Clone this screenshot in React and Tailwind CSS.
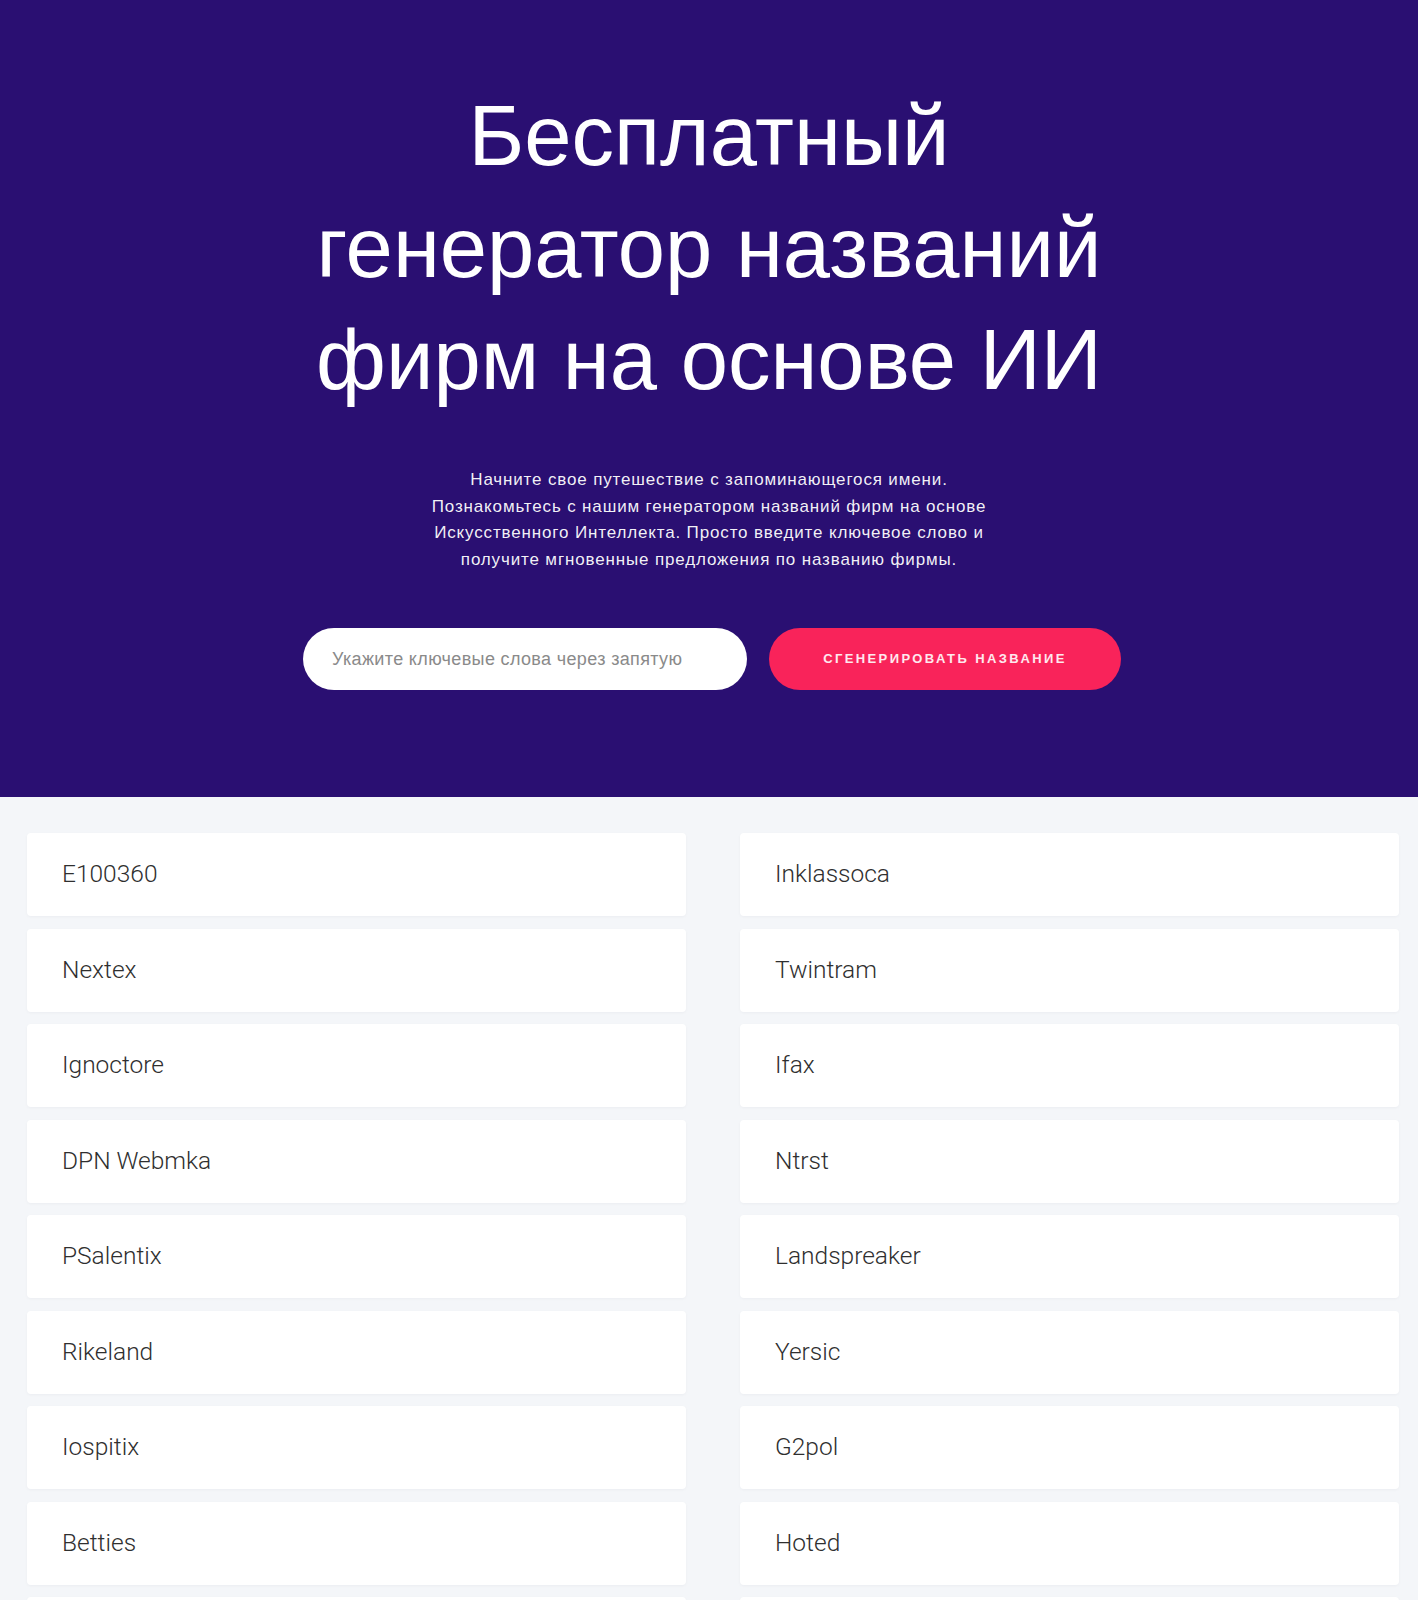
const LEFT = ["E100360", "Nextex", "Ignoctore", "DPN Webmka", "PSalentix", "Rikeland", "Iospitix", "Betties", "Zentrox"];
const RIGHT = ["Inklassoca", "Twintram", "Ifax", "Ntrst", "Landspreaker", "Yersic", "G2pol", "Hoted", "Vexpoint"];

const names = LEFT.flatMap((n, i) => [n, RIGHT[i]]);

export default function App() {
  return (
    <div className="min-h-screen bg-[#f4f6f9] font-['Liberation_Sans',Arial,sans-serif]">
      <section className="bg-[#2a0f72] px-4 pt-[80px] pb-[107px] text-center text-white">
        <h1 className="mx-auto max-w-[840px] text-[85px] leading-[112px] font-normal">
          Бесплатный
          <br />
          генератор названий
          <br />
          фирм на основе ИИ
        </h1>

        <p className="mx-auto mt-[51px] max-w-[640px] text-[17px] leading-[26.5px] tracking-[0.85px] text-white/95">
          Начните свое путешествие с запоминающегося имени.
          <br />
          Познакомьтесь с нашим генератором названий фирм на основе
          <br />
          Искусственного Интеллекта. Просто введите ключевое слово и
          <br />
          получите мгновенные предложения по названию фирмы.
        </p>

        <form className="mt-[55px] flex justify-center gap-[22px] pl-[6px]" onSubmit={e => e.preventDefault()}>
          <input
            type="text"
            placeholder="Укажите ключевые слова через запятую"
            className="h-[62px] w-[444px] rounded-full bg-white px-[29px] text-[18px] tracking-[0.35px] text-[#333] placeholder:text-[#8a8a8a] outline-none"
          />
          <button
            type="submit"
            className="h-[62px] w-[352px] rounded-full bg-[#f9235a] text-[13px] font-bold uppercase tracking-[2.4px] text-white/90"
          >
            Сгенерировать название
          </button>
        </form>
      </section>

      <section className="grid grid-cols-2 gap-x-[54px] gap-y-[12.5px] pl-[27px] pr-[19px] pt-[36px] pb-10">
        {names.map((name, i) => (
          <div
            key={i}
            className="flex h-[83px] items-center rounded bg-white pl-[35px] shadow-[0_1px_3px_rgba(20,30,60,0.04)]"
          >
            <span className="font-['Roboto',sans-serif] text-[24.5px] font-light text-[#2f2f2f]">{name}</span>
          </div>
        ))}
      </section>
    </div>
  );
}
